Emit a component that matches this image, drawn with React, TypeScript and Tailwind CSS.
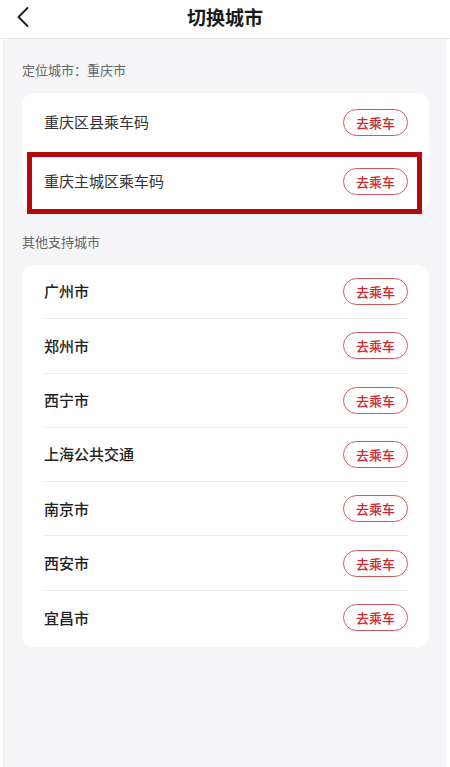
import React from "react";

const local = ["重庆区县乘车码", "重庆主城区乘车码"];
const others = ["广州市", "郑州市", "西宁市", "上海公共交通", "南京市", "西安市", "宜昌市"];

function Btn() {
  return (
    <div className="w-[65px] h-[27px] rounded-full border border-[#cd5a60] flex items-center justify-center text-[13px] font-medium text-[#cf2a30] leading-none">
      去乘车
    </div>
  );
}

export default function App() {
  return (
    <div
      className="w-[450px] h-[767px] bg-white flex flex-col overflow-hidden"
      style={{ fontFamily: '"Noto Sans CJK SC", "Noto Sans", sans-serif' }}
    >
      <div className="h-[39px] shrink-0 relative flex items-center justify-center border-b border-[#e8e8ea]">
        <svg className="absolute left-[15px] top-[6px]" width="16" height="22" viewBox="0 0 16 22">
          <path d="M12.5 2 L3.5 11 L12.5 20" fill="none" stroke="#222" strokeWidth="2" strokeLinecap="round" strokeLinejoin="round" />
        </svg>
        <div className="text-[19px] font-semibold text-[#1a1a1a] leading-none -mt-[6px]">切换城市</div>
      </div>
      <div className="flex-1 mx-[3px] bg-[#f5f4f6] border-l border-[#ececee] px-[18px] flex flex-col">
        <div className="pt-[22px] text-[13px] leading-[18px] text-[#666]">定位城市：重庆市</div>
        <div className="relative mt-[14px] bg-white rounded-[12px] pl-[22px] pr-[21px] pb-[1px]">
          {local.map((t) => (
            <div key={t} className="h-[59px] flex items-center justify-between">
              <span className="text-[15px] text-[#333]">{t}</span>
              <Btn />
            </div>
          ))}
          <div className="absolute left-[5px] top-[59px] w-[395px] h-[62px] border-[5px] border-[#b40a0d] pointer-events-none" />
        </div>
        <div className="mt-[21px] text-[13px] leading-[18px] text-[#666]">其他支持城市</div>
        <div className="mt-[14px] bg-white rounded-[12px] pl-[22px] pr-[21px] pb-[2px]">
          {others.map((t, i) => (
            <div
              key={t}
              className={
                "h-[54.3px] flex items-center justify-between " +
                (i < others.length - 1 ? "border-b border-[#ececee]" : "")
              }
            >
              <span className="text-[15px] font-medium text-[#222]">{t}</span>
              <Btn />
            </div>
          ))}
        </div>
      </div>
    </div>
  );
}
